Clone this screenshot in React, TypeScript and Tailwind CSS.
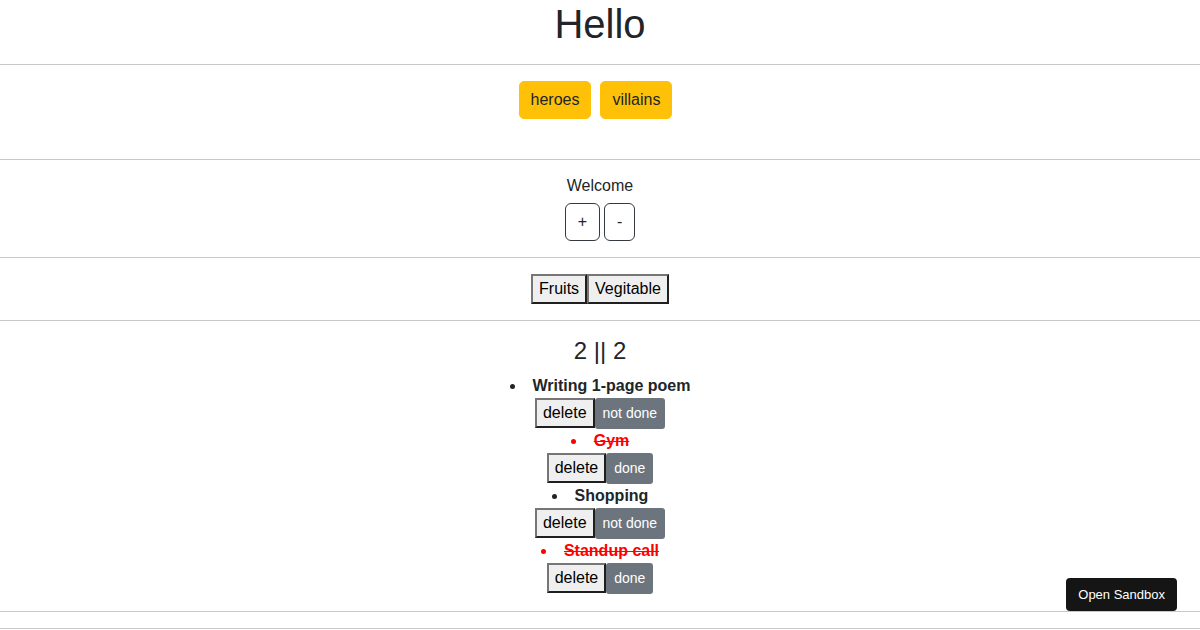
import React from "react";

type Todo = {
  id: number;
  title: string;
  done: boolean;
};

const todos: Todo[] = [
  { id: 1, title: "Writing 1-page poem", done: false },
  { id: 2, title: "Gym", done: true },
  { id: 3, title: "Shopping", done: false },
  { id: 4, title: "Standup call", done: true },
];

function Rule() {
  return <div className="my-4 h-px w-full bg-[#c8c8c8]" />;
}

function GrayButton({ children }: { children: React.ReactNode }) {
  return (
    <button className="h-[31px] rounded-[3px] bg-[#6c757d] px-2 text-[14px] leading-[21px] text-white">
      {children}
    </button>
  );
}

function PlainButton({ children }: { children: React.ReactNode }) {
  return (
    <button className="h-[30px] border-2 border-t-[#767676] border-l-[#767676] border-b-[#1f1f1f] border-r-[#1f1f1f] bg-[#efefef] px-[6px] text-[16px] leading-[22px] text-black">
      {children}
    </button>
  );
}

export default function App() {
  return (
    <div className="min-h-[630px] bg-white text-center text-[16px] text-[#212529] [font-family:'Liberation_Sans',Arial,sans-serif]">
      <h1 className="text-[40px] leading-[48px] font-normal">Hello</h1>
      <Rule />

      <div className="flex justify-center gap-[9px] pb-6 pr-[9px]">
        <button className="h-[38px] rounded-[5px] border border-[#ffc107] bg-[#ffc107] px-[11px] leading-6 text-[#212529]">
          heroes
        </button>
        <button className="h-[38px] rounded-[5px] border border-[#ffc107] bg-[#ffc107] px-[11px] leading-6 text-[#212529]">
          villains
        </button>
      </div>
      <Rule />

      <div className="pt-[1px] mb-2 leading-[18px]">Welcome</div>
      <div className="flex justify-center gap-[4px]">
        <button className="h-[38px] rounded-[6px] border border-[#343a40] bg-white px-3 leading-6 text-[#212529]">
          +
        </button>
        <button className="h-[38px] rounded-[6px] border border-[#343a40] bg-white px-3 leading-6 text-[#212529]">
          -
        </button>
      </div>
      <Rule />

      <div className="flex justify-center">
        <PlainButton>Fruits</PlainButton>
        <PlainButton>Vegitable</PlainButton>
      </div>
      <Rule />

      <h4 className="-mt-px mb-[9px] text-[24px] leading-[29px] font-normal">2 || 2</h4>
      <ul className="flex flex-col items-center pb-px">
        {todos.map((todo) => (
          <li key={todo.id} className="flex flex-col items-center">
            <div
              className={
                todo.done
                  ? "flex items-center font-bold leading-6 text-[#ff0000] line-through"
                  : "flex items-center font-bold leading-6 text-[#212529]"
              }
            >
              <span className="mr-[18px] mt-[1px] h-[5px] w-[5px] rounded-full bg-current" />
              <span>{todo.title}</span>
            </div>
            <div className="flex items-start">
              <PlainButton>delete</PlainButton>
              <GrayButton>{todo.done ? "done" : "not done"}</GrayButton>
            </div>
          </li>
        ))}
      </ul>
      <Rule />
      <Rule />

      <button className="fixed right-[23px] bottom-[19px] h-[33px] rounded-[4px] bg-[#151515] px-3 text-[13px] text-white">
        Open Sandbox
      </button>
    </div>
  );
}
